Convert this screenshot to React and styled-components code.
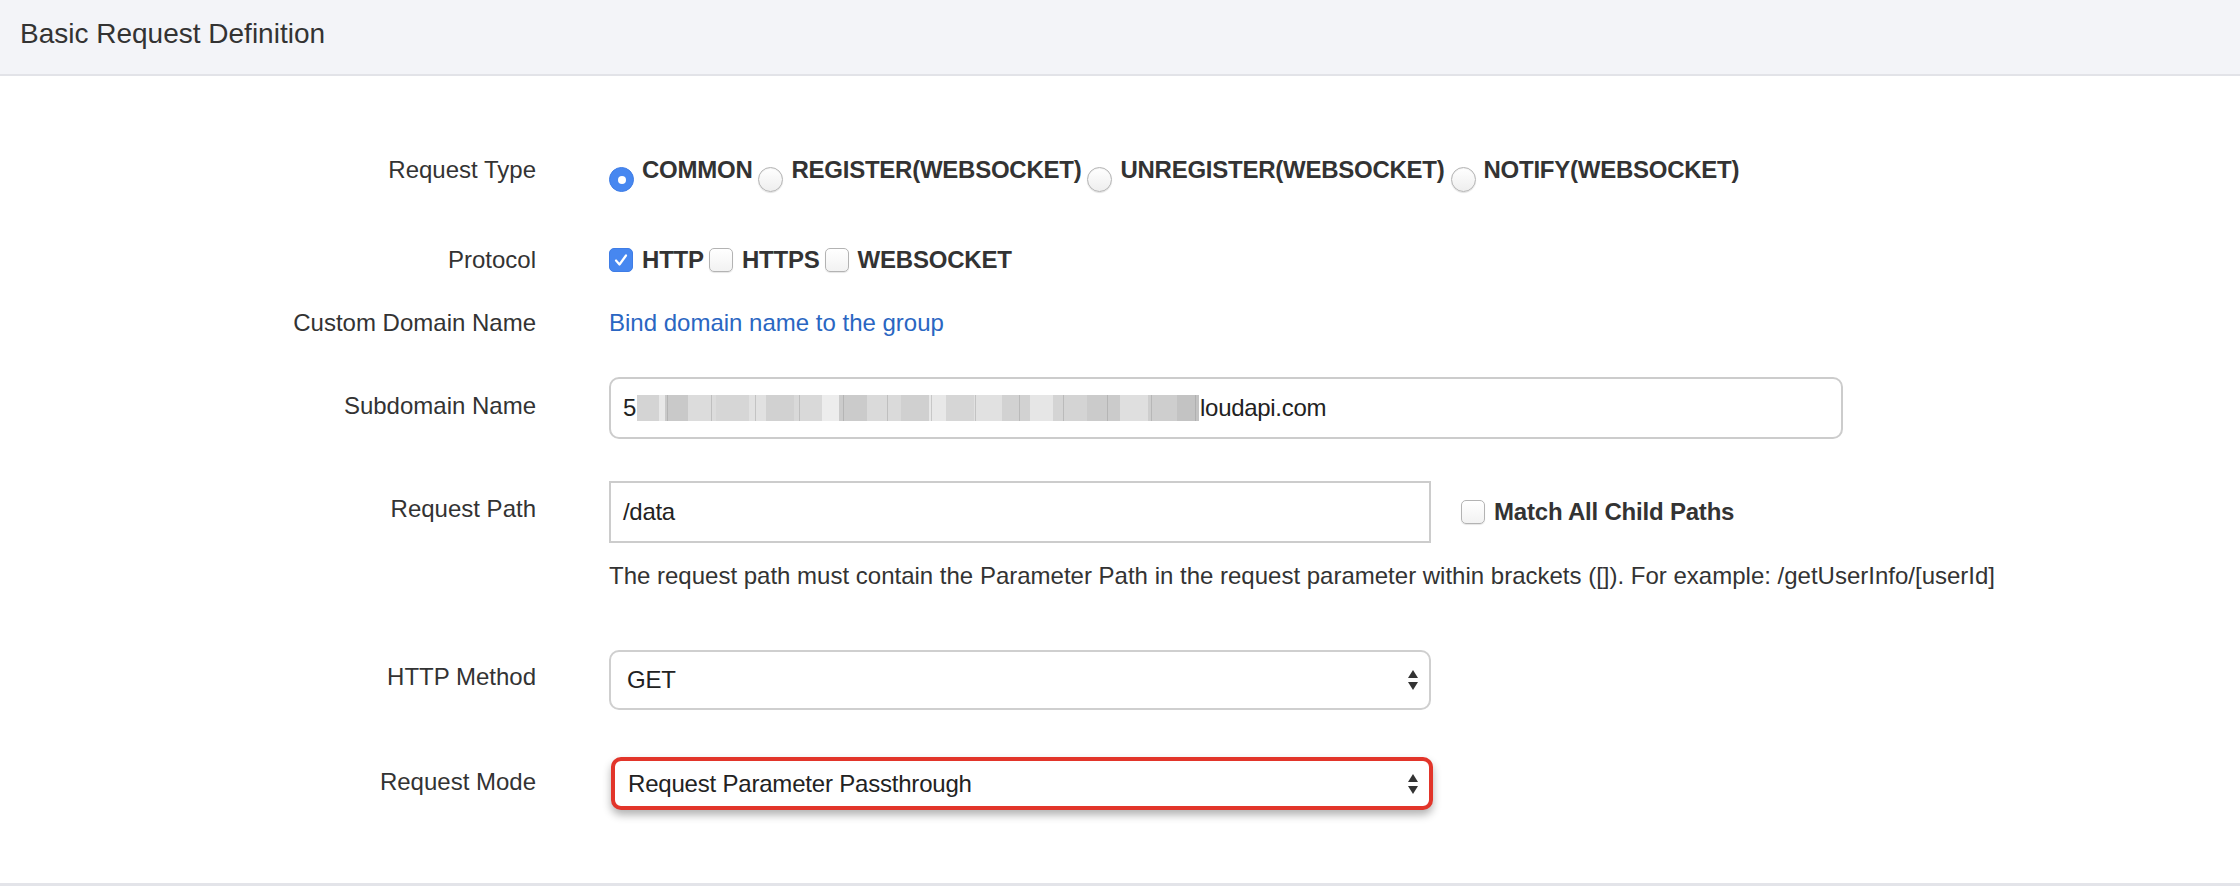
import React from "react";
import styled, { createGlobalStyle } from "styled-components";

const GlobalStyle = createGlobalStyle`
  html, body { margin: 0; padding: 0; background: #fff; }
  body {
    font-family: "Liberation Sans", Arial, Helvetica, sans-serif;
    color: #333;
    -webkit-font-smoothing: antialiased;
  }
  * { box-sizing: border-box; }
`;

const Page = styled.div`
  width: 2240px;
  height: 886px;
  overflow: hidden;
  display: flex;
  flex-direction: column;
`;

const Header = styled.header`
  height: 76px;
  flex: none;
  background: #f3f4f8;
  border-bottom: 2px solid #e2e3e8;
  display: flex;
  align-items: center;
  padding: 0 0 6px 20px;
  font-size: 28px;
  color: #333;
`;

const Body = styled.div`
  flex: 1;
  padding-top: 74px;
  border-bottom: 3px solid #e3e4e9;
  display: flex;
  flex-direction: column;
`;

const Row = styled.div`
  display: grid;
  grid-template-columns: 536px 1fr;
  column-gap: 73px;
  align-items: center;
  min-height: ${(p) => p.$h || 40}px;
  margin-top: ${(p) => p.$mt || 0}px;
`;

const Label = styled.div`
  text-align: right;
  font-size: 24px;
  line-height: 28px;
  color: #333;
  align-self: ${(p) => p.$self || "center"};
  padding-top: ${(p) => p.$pt || 0}px;
  transform: translateY(${(p) => p.$dy || 0}px);
`;

const Controls = styled.div`
  display: flex;
  align-items: ${(p) => p.$align || "center"};
  align-self: ${(p) => p.$self || "center"};
  padding-top: ${(p) => p.$pt || 0}px;
  gap: ${(p) => p.$gap || 0}px;
`;

const Option = styled.label`
  display: flex;
  align-items: flex-start;
  gap: 8px;
  font-size: 24px;
  line-height: 28px;
  font-weight: 700;
  letter-spacing: -0.25px;
  color: #333;
  margin-right: 6px;
`;

const Radio = styled.span`
  width: 25px;
  height: 25px;
  margin-top: 11px;
  border-radius: 50%;
  flex: none;
  display: flex;
  align-items: center;
  justify-content: center;
  ${(p) =>
    p.$checked
      ? `background: #4787f0; border: 1px solid #3f7de6;`
      : `background: linear-gradient(#ffffff, #eeeeee); border: 1px solid #b3b3b3; box-shadow: inset 0 1px 1px rgba(0,0,0,0.05), 0 1px 1px rgba(0,0,0,0.12);`}
`;

const Dot = styled.span`
  width: 8px;
  height: 8px;
  border-radius: 50%;
  background: #fff;
`;

const CheckOption = styled.label`
  display: flex;
  align-items: center;
  gap: 9px;
  font-size: 24px;
  line-height: 28px;
  font-weight: 700;
  letter-spacing: -0.2px;
  color: #333;
  margin-right: ${(p) => (p.$last ? 0 : 5)}px;
`;

const Box = styled.span`
  width: 24px;
  height: 24px;
  border-radius: 5px;
  flex: none;
  display: flex;
  align-items: center;
  justify-content: center;
  ${(p) =>
    p.$checked
      ? `background: #4787f0; border: 1px solid #3f7de6;`
      : `background: linear-gradient(#ffffff, #f2f2f2); border: 1px solid #b3b3b3; box-shadow: 0 1px 1px rgba(0,0,0,0.1);`}
`;

const Link = styled.a`
  font-size: 24px;
  line-height: 28px;
  color: #2a66c2;
  text-decoration: none;
`;

const TextInput = styled.div`
  width: ${(p) => p.$w}px;
  height: 62px;
  border: 2px solid #cccccc;
  border-radius: ${(p) => p.$r || 0}px;
  background: #fff;
  display: flex;
  align-items: center;
  padding-left: 12px;
  font-size: 24px;
  letter-spacing: -0.3px;
  color: #222;
`;

const Blur = styled.span`
  display: inline-block;
  width: 562px;
  height: 26px;
  margin: 0 1px 0 1px;
  opacity: 0.85;
  background:
    repeating-linear-gradient(90deg, transparent 0 30px, rgba(120,120,120,0.35) 30px 31px, transparent 31px 44px),
    linear-gradient(
      90deg,
      #cdcdcd 0 4%, #e4e4e4 4% 5%, #c0c0c0 5% 9%, #d6d6d6 9% 14%, #d0d0d0 14% 20%,
      #dcdcdc 20% 23%, #c9c9c9 23% 28%, #d3d3d3 28% 33%, #ebebeb 33% 36%, #c3c3c3 36% 41%,
      #d4d4d4 41% 47%, #c8c8c8 47% 52%, #e4e4e4 52% 55%, #cfcfcf 55% 60%, #dcdcdc 60% 65%,
      #cbcbcb 65% 70%, #e2e2e2 70% 74%, #cdcdcd 74% 80%, #c3c3c3 80% 86%, #dadada 86% 91%,
      #c6c6c6 91% 96%, #b9b9b9 96% 100%
    );
`;

const Help = styled.div`
  font-size: 24px;
  line-height: 28px;
  color: #333;
  margin-top: 19px;
`;

const Select = styled.div`
  width: ${(p) => p.$w}px;
  height: ${(p) => p.$h}px;
  border: ${(p) => (p.$highlight ? "4px solid #e2352a" : "2px solid #cfcfcf")};
  border-radius: 10px;
  background: #fff;
  box-shadow: ${(p) => (p.$highlight ? "0 5px 8px rgba(0,0,0,0.3)" : "none")};
  margin-left: ${(p) => (p.$highlight ? 2 : 0)}px;
  display: flex;
  align-items: center;
  justify-content: space-between;
  padding: 0 10px 0 ${(p) => (p.$highlight ? 13 : 16)}px;
  font-size: 24px;
  letter-spacing: -0.2px;
  color: #222;
`;

const Arrows = () => (
  <svg width="12" height="22" viewBox="0 0 12 22">
    <path d="M6 1 L11 9 H1 Z" fill="#333" />
    <path d="M6 21 L11 13 H1 Z" fill="#333" />
  </svg>
);

const Check = () => (
  <svg width="16" height="16" viewBox="0 0 16 16">
    <path d="M3 8.5 L6.5 12.5 L13 3.5" fill="none" stroke="#fff" strokeWidth="2.2" strokeLinecap="round" strokeLinejoin="round" />
  </svg>
);

const requestTypes = [
  { label: "COMMON", checked: true },
  { label: "REGISTER(WEBSOCKET)" },
  { label: "UNREGISTER(WEBSOCKET)" },
  { label: "NOTIFY(WEBSOCKET)" },
];

const protocols = [
  { label: "HTTP", checked: true },
  { label: "HTTPS" },
  { label: "WEBSOCKET", last: true },
];

export default function App() {
  return (
    <>
      <GlobalStyle />
      <Page>
        <Header>Basic Request Definition</Header>
        <Body>
          <Row $h={42}>
            <Label $self="start" $pt={6}>Request Type</Label>
            <Controls $align="flex-start" $self="start" $pt={6}>
              {requestTypes.map((t) => (
                <Option key={t.label}>
                  <Radio $checked={t.checked}>{t.checked && <Dot />}</Radio>
                  {t.label}
                </Option>
              ))}
            </Controls>
          </Row>

          <Row $h={40} $mt={48}>
            <Label>Protocol</Label>
            <Controls>
              {protocols.map((p) => (
                <CheckOption key={p.label} $last={p.last}>
                  <Box $checked={p.checked}>{p.checked && <Check />}</Box>
                  {p.label}
                </CheckOption>
              ))}
            </Controls>
          </Row>

          <Row $h={40} $mt={23}>
            <Label>Custom Domain Name</Label>
            <Controls>
              <Link href="#">Bind domain name to the group</Link>
            </Controls>
          </Row>

          <Row $h={62} $mt={34}>
            <Label $dy={-2}>Subdomain Name</Label>
            <Controls>
              <TextInput $w={1234} $r={10}>
                5<Blur />loudapi.com
              </TextInput>
            </Controls>
          </Row>

          <Row $h={62} $mt={42}>
            <Label $dy={-3}>Request Path</Label>
            <Controls $gap={30}>
              <TextInput $w={822}>/data</TextInput>
              <CheckOption $last>
                <Box />
                Match All Child Paths
              </CheckOption>
            </Controls>
          </Row>

          <Row $h={28}>
            <div />
            <Help>
              The request path must contain the Parameter Path in the request parameter within brackets ([]). For example: /getUserInfo/[userId]
            </Help>
          </Row>

          <Row $h={60} $mt={60}>
            <Label $dy={-3}>HTTP Method</Label>
            <Controls>
              <Select $w={822} $h={60}>
                GET
                <Arrows />
              </Select>
            </Controls>
          </Row>

          <Row $h={53} $mt={47}>
            <Label $dy={-2}>Request Mode</Label>
            <Controls>
              <Select $w={822} $h={53} $highlight>
                Request Parameter Passthrough
                <Arrows />
              </Select>
            </Controls>
          </Row>
        </Body>
      </Page>
    </>
  );
}
